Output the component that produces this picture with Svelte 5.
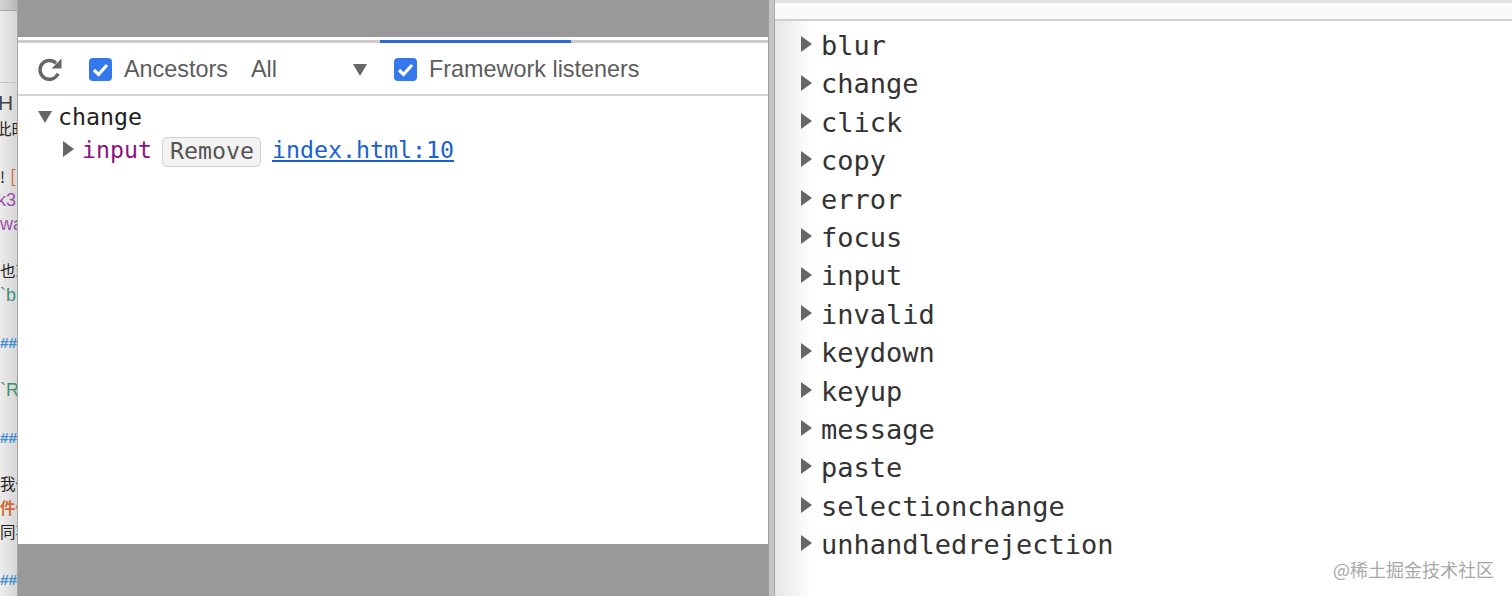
<script>
  const gutter = [
    { t: '此时', c: 'ink cut' },
    { t: '' },
    { t: '!', c: 'ink', t2: '[', c2: 'warn-bracket' },
    { t: 'k3', c: 'tag cut-small' },
    { t: 'wa', c: 'tag' },
    { t: '' },
    { t: '也就', c: 'ink' },
    { t: '`b', c: 'code' },
    { t: '' },
    { t: '###', c: 'head' },
    { t: '' },
    { t: '`R', c: 'code' },
    { t: '' },
    { t: '###', c: 'head' },
    { t: '' },
    { t: '我们', c: 'ink' },
    { t: '件们', c: 'warn' },
    { t: '同事', c: 'ink' },
    { t: '' },
    { t: '###', c: 'head' }
  ];

  const events = [
    'blur', 'change', 'click', 'copy', 'error', 'focus', 'input',
    'invalid', 'keydown', 'keyup', 'message', 'paste',
    'selectionchange', 'unhandledrejection'
  ];
</script>

<div class="page">
  <aside class="gutter">
    <div class="gutter-tab"></div>
    <div class="gutter-bar"></div>
    <div class="gutter-head">H</div>
    {#each gutter as line}
      <div class="gutter-line {line.c ?? ''}">{line.t}{#if line.t2}<span class={line.c2}>{line.t2}</span>{/if}</div>
    {/each}
  </aside>

  <main class="devtools">
    <section class="panel">
      <div class="tabs"><span class="active-tab"></span></div>
      <div class="toolbar">
        <svg class="refresh" width="26" height="26" viewBox="0 0 26 26">
          <path d="M21 16.6A9.4 9.4 0 1 1 19 6.2" fill="none" stroke="#666" stroke-width="3.4"/>
          <path d="M24.5 1.5V11.4H14.6Z" fill="#666"/>
        </svg>
        <span class="check">
          <svg width="23" height="23" viewBox="0 0 23 23"><path d="M5 12l4.5 4.5 8.5-9.5" fill="none" stroke="#fff" stroke-width="3.2"/></svg>
        </span>
        <span class="label ancestors">Ancestors</span>
        <span class="label all">All</span>
        <span class="select-arrow"></span>
        <span class="check">
          <svg width="23" height="23" viewBox="0 0 23 23"><path d="M5 12l4.5 4.5 8.5-9.5" fill="none" stroke="#fff" stroke-width="3.2"/></svg>
        </span>
        <span class="label framework">Framework listeners</span>
      </div>
      <div class="tree">
        <div class="tree-row">
          <span class="tri down"></span>
          <span class="name">change</span>
        </div>
        <div class="tree-row child">
          <span class="tri right small"></span>
          <span class="node">input</span>
          <button class="remove">Remove</button>
          <span class="link">index.html:10</span>
        </div>
      </div>
    </section>
  </main>

  <div class="divider"></div>

  <section class="events">
    <div class="events-top"></div>
    <ul>
      {#each events as ev}
        <li><span class="tri right"></span>{ev}</li>
      {/each}
    </ul>
    <span class="watermark">@稀土掘金技术社区</span>
  </section>
</div>

<style>
  :global(body) {
    margin: 0;
    overflow: hidden;
  }

  .page {
    display: flex;
    position: relative;
    height: 596px;
    width: 1512px;
    overflow: hidden;
    background: #fff;
  }

  .gutter {
    width: 17px;
    flex: none;
    overflow: hidden;
    background: linear-gradient(90deg, #ececec, #d6d6d6);
    border-right: 1px solid #a8a8a8;
    white-space: nowrap;
    font: 15.5px/25px "Noto Sans CJK SC", "Liberation Sans", sans-serif;
  }

  .gutter-tab {
    height: 10px;
    background: linear-gradient(90deg, #d4d4d4, #b8b8b8);
    border-bottom: 1px solid #a6a6a6;
  }

  .gutter-bar {
    height: 71px;
    border-bottom: 1px solid #c4c4c4;
  }

  .gutter-head {
    margin: 8px 0 0 -2px;
    height: 25px;
    font: 21px/24px "Liberation Sans", sans-serif;
    color: #444;
  }

  .gutter-line {
    height: 23.7px;
  }

  .cut { margin-left: -4px; }
  .cut-small { margin-left: -3px; }
  .ink { color: #222; }
  .tag { color: #9a4ea8; font: 18px/27.7px "Liberation Sans", sans-serif; }
  .code { color: #3f8f7c; font: 18px/27.7px "Liberation Sans", sans-serif; }
  .head { color: #3f8fd2; font: 700 15.5px/27.7px "Liberation Sans", sans-serif; }
  .warn { color: #d2693a; font-weight: 700; }
  .warn-bracket { color: #d2693a; margin-left: 5px; font-size: 18px; }

  .devtools {
    width: 750px;
    flex: none;
    background: #999;
    padding-top: 37px;
    height: 596px;
    box-sizing: border-box;
  }

  .panel {
    height: 507px;
    background: #fff;
  }

  .tabs {
    height: 6px;
    box-sizing: border-box;
    border-bottom: 3px solid #ccc;
    display: flex;
    padding-left: 362px;
  }

  .active-tab {
    width: 191px;
    height: 3px;
    margin-top: 3px;
    background: #2a6ad6;
    flex: none;
  }

  .toolbar {
    display: flex;
    align-items: center;
    height: 53px;
    padding: 2px 0 0 19px;
    border-bottom: 2px solid #d4d4d4;
    box-sizing: border-box;
  }

  .refresh {
    flex: none;
    margin-right: 26px;
  }

  .check {
    width: 23px;
    height: 23px;
    border-radius: 4px;
    background: #3478ee;
    display: flex;
    flex: none;
    margin-right: 12px;
  }

  .label {
    font: 23.4px "Liberation Sans", sans-serif;
    color: #5c5c5c;
    white-space: nowrap;
  }

  .ancestors { width: 127px; }
  .all { width: 102px; }

  .select-arrow {
    width: 0;
    height: 0;
    border-left: 7px solid transparent;
    border-right: 7px solid transparent;
    border-top: 12px solid #666;
    margin-right: 27px;
  }

  .tree {
    padding: 4px 0 0 20px;
    font: 23.25px/33px "DejaVu Sans Mono", monospace;
    color: #222;
  }

  .tree-row {
    display: flex;
    align-items: center;
    height: 33px;
    white-space: nowrap;
  }

  .child {
    padding-left: 25px;
  }

  .tri {
    display: inline-block;
    flex: none;
    width: 0;
    height: 0;
  }

  .down {
    border-left: 7px solid transparent;
    border-right: 7px solid transparent;
    border-top: 12px solid #666;
    margin: 0 6px 0 0;
  }

  .right {
    border-top: 8px solid transparent;
    border-bottom: 8px solid transparent;
    border-left: 11px solid #666;
    margin: 0 9px 4px 0;
  }

  .small {
    margin: 0 8px 2px 0;
  }

  .node {
    color: #881280;
  }

  .remove {
    margin: 4px 11px 0 10px;
    height: 30px;
    padding: 0 6px 1px 7px;
    background: #f3f3f3;
    border: 1px solid #d0d0d0;
    border-radius: 5px;
    color: #555;
    font: inherit;
    line-height: 26px;
  }

  .link {
    color: #1a62d0;
    text-decoration: underline;
  }

  .divider {
    width: 7px;
    flex: none;
    background: #c4c4c4;
    border-left: 1px solid #9c9c9c;
    border-right: 1px solid #aaa;
    box-sizing: border-box;
  }

  .events {
    flex: 1;
    background: linear-gradient(90deg, #e6e6e6, #fff 36px);
  }

  .events-top {
    height: 21px;
    box-sizing: border-box;
    border-bottom: 2px solid #d0d0d0;
    border-top: 3px solid #e2e2e2;
    background: #fafafa;
  }

  ul {
    list-style: none;
    margin: 0;
    padding: 6px 0 0 26px;
    font: 27px/38.4px "DejaVu Sans Mono", monospace;
    color: #333;
  }

  li {
    display: flex;
    align-items: center;
    height: 38.4px;
    white-space: nowrap;
  }

  .watermark {
    position: absolute;
    right: 18px;
    top: 556px;
    font: 18px "Noto Sans CJK SC", sans-serif;
    color: #a8a8a8;
  }
</style>
